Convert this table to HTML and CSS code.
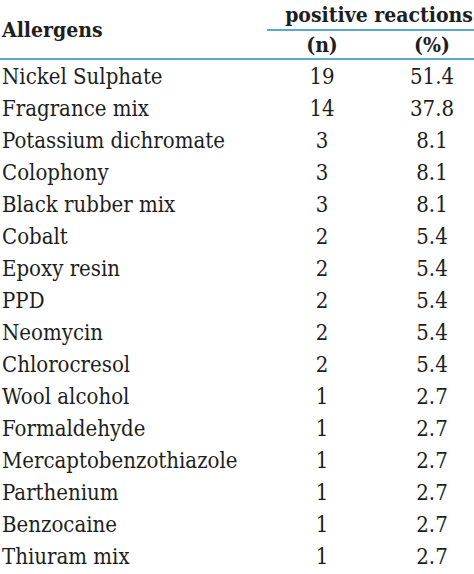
FILE: index.html
```html
<!DOCTYPE html>
<html>
<head>
<meta charset="utf-8">
<link rel="stylesheet" href="styles.css">
</head>
<body>
<table class="tbl">
  <colgroup>
    <col class="c-name">
    <col class="c-n">
    <col class="c-p">
  </colgroup>
  <thead>
    <tr class="h1">
      <th class="name" rowspan="2">Allergens</th>
      <th class="group" colspan="2">positive reactions</th>
    </tr>
    <tr class="h2">
      <th>(n)</th>
      <th>(%)</th>
    </tr>
  </thead>
  <tbody>
    <tr><td>Nickel Sulphate</td><td>19</td><td>51.4</td></tr>
    <tr><td>Fragrance mix</td><td>14</td><td>37.8</td></tr>
    <tr><td>Potassium dichromate</td><td>3</td><td>8.1</td></tr>
    <tr><td>Colophony</td><td>3</td><td>8.1</td></tr>
    <tr><td>Black rubber mix</td><td>3</td><td>8.1</td></tr>
    <tr><td>Cobalt</td><td>2</td><td>5.4</td></tr>
    <tr><td>Epoxy resin</td><td>2</td><td>5.4</td></tr>
    <tr><td>PPD</td><td>2</td><td>5.4</td></tr>
    <tr><td>Neomycin</td><td>2</td><td>5.4</td></tr>
    <tr><td>Chlorocresol</td><td>2</td><td>5.4</td></tr>
    <tr><td>Wool alcohol</td><td>1</td><td>2.7</td></tr>
    <tr><td>Formaldehyde</td><td>1</td><td>2.7</td></tr>
    <tr><td>Mercaptobenzothiazole</td><td>1</td><td>2.7</td></tr>
    <tr><td>Parthenium</td><td>1</td><td>2.7</td></tr>
    <tr><td>Benzocaine</td><td>1</td><td>2.7</td></tr>
    <tr><td>Thiuram mix</td><td>1</td><td>2.7</td></tr>
  </tbody>
</table>
</body>
</html>
```
FILE: styles.css
```css
html, body {
  margin: 0;
  padding: 0;
  background: #fff;
  overflow: hidden;
}
.tbl {
  border-collapse: collapse;
  table-layout: fixed;
  width: 487px;
  font-family: "DejaVu Serif Condensed", "DejaVu Serif", serif;
  font-size: 22px;
  color: #1e1e1e;
}
.c-name { width: 267px; }
.c-n { width: 110px; }
.c-p { width: 110px; }
th, td {
  padding: 0;
  white-space: nowrap;
}
th {
  font-weight: bold;
  font-size: 21px;
}
.h1 th {
  height: 29px;
}
.h1 .name {
  text-align: left;
  padding-left: 2px;
  vertical-align: middle;
  border-bottom: 2px solid #5aa8cb;
}
.h1 .group {
  border-bottom: 2px solid #5aa8cb;
  text-align: center;
  padding-left: 4px;
}
.h2 th {
  height: 27px;
  text-align: center;
  border-bottom: 2px solid #5aa8cb;
}
tbody td {
  height: 32px;
  text-align: center;
}
tbody td:first-child {
  text-align: left;
  padding-left: 2px;
}
```
